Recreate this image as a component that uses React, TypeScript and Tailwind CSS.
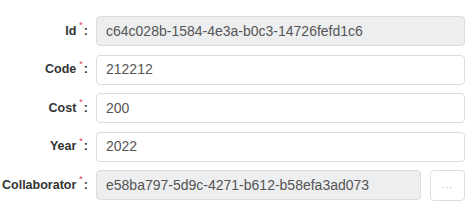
import React from "react";

const rows = [
  { label: "Id", value: "c64c028b-1584-4e3a-b0c3-14726fefd1c6", disabled: true },
  { label: "Code", value: "212212" },
  { label: "Cost", value: "200" },
  { label: "Year", value: "2022" },
  { label: "Collaborator", value: "e58ba797-5d9c-4271-b612-b58efa3ad073", disabled: true, button: true },
];

export default function App() {
  return (
    <div
      className="w-[474px] h-[210px] bg-white pt-[16px] pr-[9px] flex flex-col gap-[8.5px]"
      style={{ fontFamily: '"Liberation Sans", Arial, sans-serif' }}
    >
      {rows.map((r) => (
        <div key={r.label} className="flex items-center h-[30px]">
          <div className="w-[96px] shrink-0 pr-[8px] flex justify-end items-center text-[12.5px] font-bold text-[#333]">
            <span>{r.label}</span>
            <span className="text-[#e4393c] text-[9px] font-normal relative top-[-5px] ml-[3px]">*</span>
            <span className="ml-[1px]">:</span>
          </div>
          <div className="flex-1 flex gap-[9px] h-full">
            <div
              className={
                "flex-1 h-full rounded-[4px] border border-[#dcdcdc] flex items-center px-[9px] text-[14px] text-[#555] " +
                (r.disabled ? "bg-[#eceeef]" : "bg-white")
              }
            >
              {r.value}
            </div>
            {r.button && (
              <div className="w-[35px] h-[31px] rounded-[4px] border border-[#dedede] bg-white flex items-center justify-center text-[9px] text-[#aaa] tracking-[1px]">
                ...
              </div>
            )}
          </div>
        </div>
      ))}
    </div>
  );
}
